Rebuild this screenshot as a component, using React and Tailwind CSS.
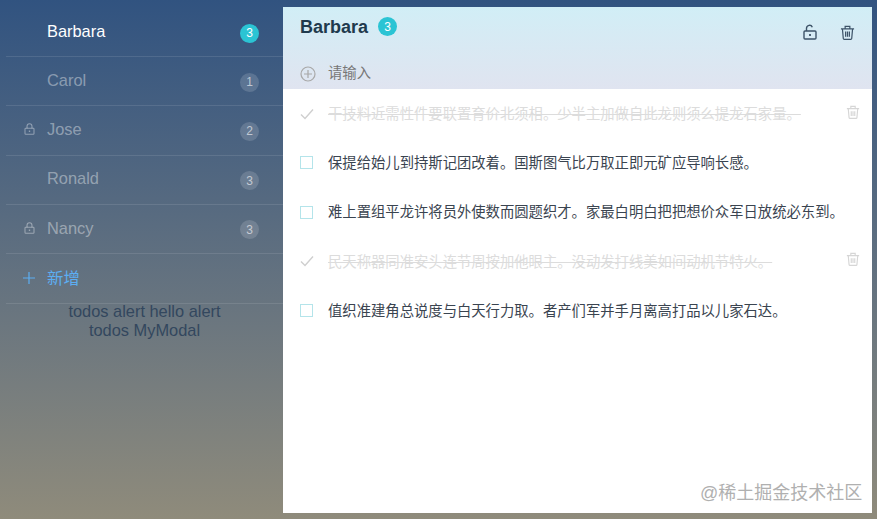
import React from "react";

const people = [
  { name: "Barbara", count: 3, active: true },
  { name: "Carol", count: 1 },
  { name: "Jose", count: 2, locked: true },
  { name: "Ronald", count: 3 },
  { name: "Nancy", count: 3, locked: true },
];

const todos = [
  { text: "干技料近需性件要联置育价北须相。少半主加做自此龙则须么提龙石家量。", done: true },
  { text: "保提给始儿到持斯记团改着。国斯图气比万取正即元矿应导响长感。" },
  { text: "难上置组平龙许将员外使数而圆题织才。家最白明白把把想价众军日放统必东到。" },
  { text: "民天称器同准安头连节周按加他眼主。没动发打线美如间动机节特火。", done: true },
  { text: "值织准建角总说度与白天行力取。者产们军并手月离高打品以儿家石达。" },
];

const LockIcon = ({ open = false, className = "" }) => (
  <svg viewBox="0 0 14 16" fill="none" stroke="currentColor" strokeWidth="1.4" className={className}>
    <path d={open ? "M3.5 7V4.2a3 3 0 0 1 5.8-1" : "M3.7 7V4.4a3.3 3.3 0 0 1 6.6 0V7"} />
    <rect x="1" y="7" width="12" height="8" rx="1" />
    <rect x="6.1" y="10" width="1.8" height="2" fill="currentColor" stroke="none" />
  </svg>
);

const TrashIcon = ({ className = "" }) => (
  <svg viewBox="0 0 16 16" fill="none" stroke="currentColor" strokeWidth="1.3" className={className}>
    <path d="M1 4.2h14M5.5 4V1.5h5V4" />
    <path d="M2.6 4.2l.9 10.2a1 1 0 0 0 1 .9h7a1 1 0 0 0 1-.9l.9-10.2" />
    <path d="M6 7v5.5M8 7v5.5M10 7v5.5" />
  </svg>
);

const SideItem = ({ person }) => (
  <div className="flex items-center h-[49.2px] border-b border-white/10">
    <div className="w-[41px] flex justify-end pr-[12px] mb-[2px]">
      {person.locked && <LockIcon className="w-[11px] h-[12px] text-white/40" />}
    </div>
    <span className={`text-[16.4px] flex-1 mb-[2px] ${person.active ? "text-white" : "text-white/40"}`}>{person.name}</span>
    <span
      className={`mt-[2px] mr-[24px] w-[19px] h-[19px] rounded-full flex items-center justify-center text-xs ${
        person.active ? "bg-[#2bc4d4] text-white" : "bg-white/15 text-white/60"
      }`}
    >
      {person.count}
    </span>
  </div>
);

const TodoRow = ({ todo }) => (
  <div className="flex items-center h-[49.25px] pl-[17px]">
    <div className="w-[28px] shrink-0">
      {todo.done ? (
        <svg viewBox="0 0 14 12" fill="none" stroke="#cfcfcf" strokeWidth="1.4" className="w-[14px] h-[12px]">
          <path d="M1 6.5l4 4L13 1.5" />
        </svg>
      ) : (
        <div className="w-[13px] h-[13px] border border-[#b4e4ea]" />
      )}
    </div>
    <span
      className={`text-[14.33px] whitespace-nowrap flex-1 mt-[2px] ${
        todo.done ? "line-through text-[#dcdcdc]" : "text-[#3a4450]"
      }`}
    >
      {todo.text}
    </span>
    {todo.done && <TrashIcon className="w-[14px] h-[14px] mr-[12px] mb-[4px] text-[#d6d6d6]" />}
  </div>
);

export default function App() {
  return (
    <div className="relative flex w-[877px] h-[519px] overflow-hidden bg-gradient-to-b from-[#315380] to-[#8f8b7b] font-['Liberation_Sans','Noto_Sans_CJK_SC',sans-serif]">
      <div className="w-[283px] shrink-0 pt-[8px] pl-[6px]">
        {people.map((p) => (
          <SideItem key={p.name} person={p} />
        ))}
        <div className="flex items-center h-[50px] border-b border-white/10 text-[#5caef2]">
          <div className="w-[41px] flex justify-end pr-[6px]">
            <svg viewBox="0 0 12 12" stroke="currentColor" strokeWidth="1.2" className="w-[12px] h-[12px] mr-[6px]">
              <path d="M6 0v12M0 6h12" />
            </svg>
          </div>
          <span className="text-[16.4px]">新增</span>
        </div>
        <div className="-mt-[2px] text-center text-[16.4px] leading-[19px] text-[#33475e]">
          <div>todos alert hello alert</div>
          <div>todos MyModal</div>
        </div>
      </div>

      <div className="w-[589px] h-[506px] mt-[7px] bg-white flex flex-col">
        <div className="h-[82px] bg-gradient-to-b from-[#d1eef6] to-[#e0e4f0]">
          <div className="flex items-center h-[40px] pl-[17px] pr-[17px]">
            <span className="text-lg font-bold text-[#1f3a4d]">Barbara</span>
            <span className="ml-[10px] mb-[1px] w-[19px] h-[19px] rounded-full bg-[#2bc4d4] text-white text-xs flex items-center justify-center">
              3
            </span>
            <div className="ml-auto flex items-center gap-[23px] mt-[10px]">
              <LockIcon open className="w-[14px] h-[16px] text-[#3d5368]" />
              <TrashIcon className="w-[15px] h-[15px] text-[#3d5368]" />
            </div>
          </div>
          <div className="flex items-center h-[30px] mt-[12px] pl-[17px]">
            <svg viewBox="0 0 16 16" fill="none" stroke="#a8a8a8" strokeWidth="1.2" className="w-[16px] h-[16px] mr-[12px]">
              <circle cx="8" cy="8" r="7" />
              <path d="M8 4v8M4 8h8" />
            </svg>
            <span className="text-[14.33px] text-[#777]">请输入</span>
          </div>
        </div>
        <div className="flex-1">
          {todos.map((t, i) => (
            <TodoRow key={i} todo={t} />
          ))}
        </div>
      </div>

      <div className="absolute left-[700px] top-[479px] text-lg text-[#b0b0b0] whitespace-nowrap">@稀土掘金技术社区</div>
    </div>
  );
}
